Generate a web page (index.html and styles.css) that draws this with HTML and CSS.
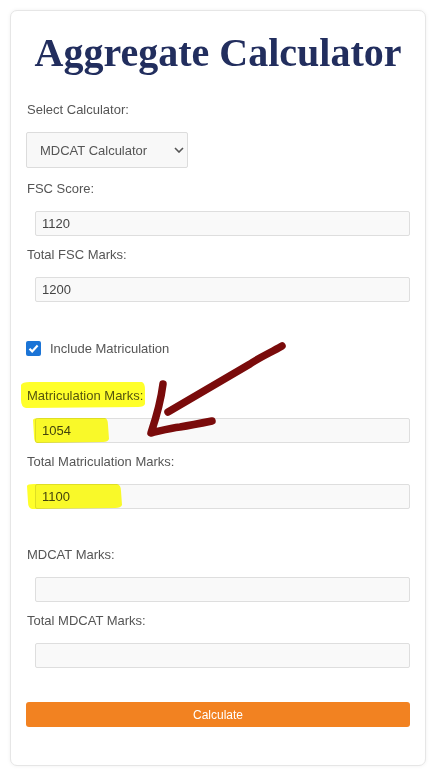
FILE: index.html
```html
<!DOCTYPE html>
<html lang="en">
<head>
<meta charset="utf-8">
<title>Aggregate Calculator</title>
<link rel="stylesheet" href="styles.css">
</head>
<body>
<div class="card">
  <h1 class="title">Aggregate Calculator</h1>
  <form class="form">
    <label class="lbl lbl-first">Select Calculator:</label>
    <div class="select-wrap">
      <select class="select"><option>MDCAT Calculator</option></select>
      <svg class="chev" width="10" height="6" viewBox="0 0 10 6"><path d="M1 1 L5 5 L9 1" fill="none" stroke="#555" stroke-width="1.6"/></svg>
    </div>
    <label class="lbl lbl-a">FSC Score:</label>
    <input class="field" type="text" value="1120">
    <label class="lbl">Total FSC Marks:</label>
    <input class="field" type="text" value="1200">
    <div class="check-row">
      <span class="check"><svg width="15" height="15" viewBox="0 0 15 15"><path d="M3.5 7.8 L6.2 10.4 L11.6 4.6" fill="none" stroke="#fff" stroke-width="2.2"/></svg></span>
      <span class="check-text">Include Matriculation</span>
    </div>
    <label class="lbl lbl-b">Matriculation Marks:</label>
    <input class="field" type="text" value="1054">
    <label class="lbl">Total Matriculation Marks:</label>
    <input class="field" type="text" value="1100">
    <label class="lbl lbl-c">MDCAT Marks:</label>
    <input class="field" type="text" value="">
    <label class="lbl">Total MDCAT Marks:</label>
    <input class="field" type="text" value="">
    <button class="btn" type="button">Calculate</button>
  </form>
</div>
<svg class="annot" width="437" height="782" viewBox="0 0 437 782">
  <g class="hl">
    <path d="M21 385 Q 22 382 30 382 L142 382 Q 145 383 145 390 L145 404 Q 144 407 138 407 L26 408 Q 21 407 21 400 Z" fill="#ffff2a"/>
    <path d="M33 420 Q 33 418 40 418 L105 418 Q 108 419 108 425 L109 439 Q 108 442 103 442 L37 443 Q 34 442 34 436 Z" fill="#ffff2a"/>
    <path d="M27 486 Q 27 484 34 484 L117 484 Q 121 485 121 491 L122 505 Q 121 508 115 508 L32 509 Q 28 508 28 502 Z" fill="#ffff2a"/>
  </g>
  <g fill="none" stroke="#7a0b0b" stroke-width="7.5" stroke-linecap="round" stroke-linejoin="round">
    <path d="M282 346 C 270 353 262 356 250 364 C 230 376 200 393 168 412"/>
    <path d="M163 384 C 161 400 156 418 151 433 C 160 431 170 428 180 427 C 192 425 202 423 212 421"/>
  </g>
</svg>
</body>
</html>
```

FILE: styles.css
```css
html, body {
  margin: 0;
  padding: 0;
  background: #ffffff;
}
body {
  width: 437px;
  height: 782px;
  position: relative;
  font-family: "Liberation Sans", Arial, sans-serif;
}
.card {
  position: absolute;
  top: 10px;
  left: 10px;
  width: 416px;
  box-sizing: border-box;
  border: 1px solid #e6e6e6;
  border-radius: 7px;
  box-shadow: 0 0 4px rgba(0,0,0,0.06);
  padding: 18px 15px 38px 15px;
  background: #fff;
}
.title {
  margin: 0;
  font-family: "Liberation Serif", "Times New Roman", serif;
  font-weight: bold;
  font-size: 40px;
  line-height: 48px;
  text-align: center;
  color: #222e5e;
}
.form {
  display: flex;
  flex-direction: column;
}
.lbl {
  display: block;
  font-size: 13px;
  line-height: 16px;
  color: #555;
  margin-top: 11px;
  padding-left: 1px;
}
.lbl-first { margin-top: 25px; }
.lbl-a { margin-top: 13px; }
.lbl-b { margin-top: 32px; }
.lbl-c { margin-top: 38px; }
.select-wrap {
  margin-top: 14px;
  width: 162px;
  height: 36px;
  position: relative;
}
.select {
  appearance: none;
  -webkit-appearance: none;
  width: 162px;
  height: 36px;
  box-sizing: border-box;
  border: 1px solid #dcdcdc;
  border-radius: 2px;
  background: #f8f8f8;
  font-family: "Liberation Sans", Arial, sans-serif;
  font-size: 13px;
  color: #555;
  padding: 0 0 0 13px;
  outline: none;
}
.chev {
  position: absolute;
  left: 148px;
  top: 15px;
}
.field {
  margin-top: 14px;
  margin-left: 9px;
  width: 375px;
  height: 25px;
  box-sizing: border-box;
  border: 1px solid #dedede;
  border-radius: 2px;
  background: #f9f9f9;
  font-family: "Liberation Sans", Arial, sans-serif;
  font-size: 13px;
  color: #444;
  padding: 0 6px;
  outline: none;
}
.check-row {
  margin-top: 38px;
  display: flex;
  align-items: center;
  height: 16px;
}
.check {
  width: 15px;
  height: 15px;
  border-radius: 2px;
  background: #1b74d6;
  display: inline-flex;
}
.check-text {
  margin-left: 9px;
  font-size: 13px;
  color: #555;
}
.btn {
  margin-top: 34px;
  width: 100%;
  height: 25px;
  border: none;
  border-radius: 3px;
  background: #f28221;
  color: #fff;
  font-family: "Liberation Sans", Arial, sans-serif;
  font-size: 12px;
  padding: 0;
}
.annot {
  position: absolute;
  top: 0;
  left: 0;
  pointer-events: none;
}
.hl path {
  mix-blend-mode: multiply;
}
```
